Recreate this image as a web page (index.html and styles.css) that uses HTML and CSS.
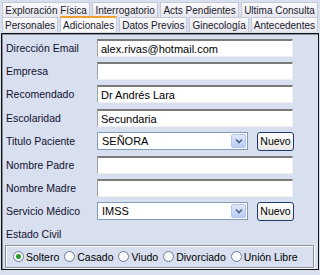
FILE: index.html
```html
<!DOCTYPE html>
<html lang="es">
<head>
    <meta charset="UTF-8">
    <title>Paciente - Adicionales</title>
    <link rel="stylesheet" href="styles.css">
</head>
<body>
    <!-- Tabs -->
    <div class="tabs">
        <div class="tab-row">
            <span class="tab">Exploración Física</span>
            <span class="tab">Interrogatorio</span>
            <span class="tab">Acts Pendientes</span>
            <span class="tab">Ultima Consulta</span>
        </div>
        <div class="tab-row">
            <span class="tab">Personales</span>
            <span class="tab active">Adicionales</span>
            <span class="tab">Datos Previos</span>
            <span class="tab">Ginecología</span>
            <span class="tab">Antecedentes</span>
        </div>
    </div>

    <!-- Panel -->
    <div class="panel">
        <div class="row">
            <label>Dirección Email</label>
            <input class="field" type="text" value="alex.rivas@hotmail.com">
        </div>
        <div class="row">
            <label>Empresa</label>
            <input class="field" type="text" value="">
        </div>
        <div class="row">
            <label>Recomendado</label>
            <input class="field" type="text" value="Dr Andrés Lara">
        </div>
        <div class="row">
            <label>Escolaridad</label>
            <input class="field" type="text" value="Secundaria">
        </div>
        <div class="row">
            <label>Titulo Paciente</label>
            <div class="combo">
                <span class="combo-text">SEÑORA</span>
                <span class="combo-btn">
                    <svg width="8" height="6" viewBox="0 0 8 6"><path d="M1 1.5 L4 4.5 L7 1.5" fill="none" stroke="#4d6185" stroke-width="1.6"/></svg>
                </span>
            </div>
            <button class="btn">Nuevo</button>
        </div>
        <div class="row">
            <label>Nombre Padre</label>
            <input class="field" type="text" value="">
        </div>
        <div class="row">
            <label>Nombre Madre</label>
            <input class="field" type="text" value="">
        </div>
        <div class="row">
            <label>Servicio Médico</label>
            <div class="combo">
                <span class="combo-text">IMSS</span>
                <span class="combo-btn">
                    <svg width="8" height="6" viewBox="0 0 8 6"><path d="M1 1.5 L4 4.5 L7 1.5" fill="none" stroke="#4d6185" stroke-width="1.6"/></svg>
                </span>
            </div>
            <button class="btn">Nuevo</button>
        </div>
        <div class="row short">
            <label>Estado Civil</label>
        </div>
        <div class="radios">
            <span class="opt"><span class="radio checked"></span>Soltero</span>
            <span class="opt"><span class="radio"></span>Casado</span>
            <span class="opt"><span class="radio"></span>Viudo</span>
            <span class="opt"><span class="radio"></span>Divorciado</span>
            <span class="opt"><span class="radio"></span>Unión Libre</span>
        </div>
    </div>
</body>
</html>
```

FILE: styles.css
```css
body {
    margin: 0;
    width: 320px;
    height: 275px;
    background-color: #d8dfee;
    font-family: "Liberation Sans", Arial, sans-serif;
    font-size: 10.5px;
    color: #000;
    overflow: hidden;
}

/* Tabs */
.tabs {
    padding: 2px 2px 0 2px;
}

.tab-row {
    display: flex;
    gap: 2px;
    height: 15px;
}

.tab {
    flex: auto;
    min-width: 0;
    display: flex;
    align-items: center;
    justify-content: center;
    padding: 0 1px;
    font-size: 10px;
    background: linear-gradient(#fbfbfd, #e6e6ee);
    border: 1px solid #c5c8d6;
    border-bottom: none;
    color: #1a1a2a;
    white-space: nowrap;
}

.tab.active {
    background: #fcfcfe;
    border-top: 2px solid #f0a030;
    margin-top: -1px;
}

/* Panel */
.panel {
    margin: 1px 1px 0 1px;
    height: 233px;
    border: 1px solid #111;
    box-shadow: inset 1px 1px 0 #8a8f9a;
    padding: 2px 4px 0 4px;
}

.row {
    display: flex;
    align-items: center;
    height: 23.4px;
}

.row.short {
    height: 22px;
}

.row label {
    width: 91px;
    flex-shrink: 0;
    color: #101030;
}

.field {
    width: 196px;
    height: 18px;
    box-sizing: border-box;
    margin: 0;
    padding: 1px 3px 0 3px;
    font-family: inherit;
    font-size: 11px;
    background: #fff;
    border: 1px solid #f0f0f0;
    border-top: 2px solid #7b7b7b;
    border-left: 1px solid #a0a0a0;
}

.combo {
    display: flex;
    align-items: center;
    justify-content: space-between;
    width: 151px;
    height: 18px;
    box-sizing: border-box;
    background: #fff;
    border: 1px solid #7f9db9;
    padding-left: 4px;
    font-size: 11px;
}

.combo-btn {
    display: flex;
    align-items: center;
    justify-content: center;
    width: 15px;
    height: 14px;
    margin-right: 1px;
    background: linear-gradient(#dfe8fb, #b9cdf3);
    border: 1px solid #b3c5ee;
    box-sizing: border-box;
    border-radius: 2px;
}

.btn {
    margin-left: 9px;
    width: 37px;
    height: 19px;
    padding: 0;
    font-family: inherit;
    font-size: 10.5px;
    color: #000;
    background: linear-gradient(#fefefe, #e8e8e4);
    border: 1px solid #1c3a6e;
    border-radius: 3px;
}

.radios {
    display: flex;
    align-items: center;
    margin: 0 0 0 -1px;
    width: 309px;
    height: 23px;
    box-sizing: border-box;
    border: 1px solid #8a8f9a;
    box-shadow: inset 1px 1px 0 #fff, 1px 1px 0 #fff;
    padding-left: 7px;
    font-size: 10.5px;
}

.opt {
    display: flex;
    align-items: center;
    margin-right: 5px;
}

.radio {
    width: 9px;
    height: 9px;
    border: 1px solid #6a7a9a;
    border-radius: 50%;
    background: #fafafa;
    margin-right: 2px;
    position: relative;
}

.radio.checked::after {
    content: "";
    position: absolute;
    left: 2px;
    top: 2px;
    width: 5px;
    height: 5px;
    border-radius: 50%;
    background: #2a9a2a;
}
```
